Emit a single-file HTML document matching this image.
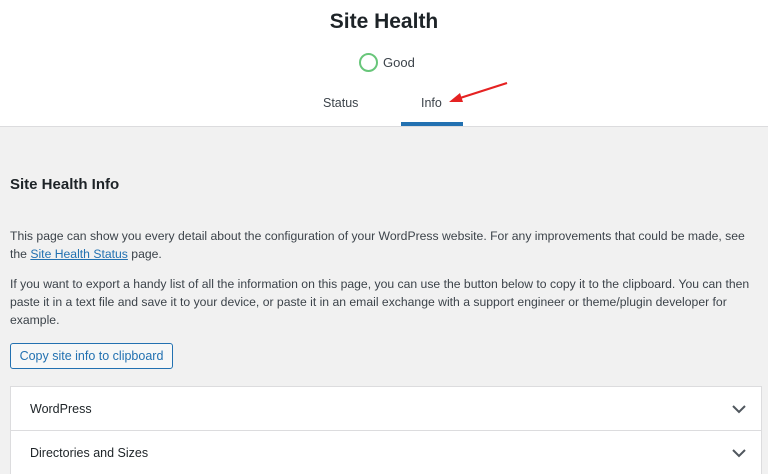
<!DOCTYPE html>
<html><head><style>
*{margin:0;padding:0;box-sizing:border-box}
html,body{width:768px;height:474px;overflow:hidden}
body{background:#f1f1f1;font-family:"Liberation Sans",sans-serif;color:#1d2327;position:relative}
.hdr{position:absolute;left:0;top:0;width:768px;height:127px;background:#fff;border-bottom:1px solid #dcdcde}
.t{position:absolute;top:10px;width:768px;text-align:center;font-size:21px;font-weight:600;color:#1d2327}
.good{position:absolute;left:359px;top:53px;width:19px;height:19px;border:2px solid #68c67a;border-radius:50%}
.gt{position:absolute;left:383px;top:55px;font-size:13px;color:#3c434a}
.tab{position:absolute;top:96px;font-size:12.5px;color:#3c434a}
.ul{position:absolute;left:401px;top:122px;width:62px;height:4px;background:#2271b1}
.a{position:absolute;left:10px;font-size:12.2px;line-height:18px;color:#3c434a;width:766px}
.btn{position:absolute;left:10px;top:343px;width:163px;height:26px;border:1px solid #2271b1;border-radius:3px;background:#f6f7f7;color:#2271b1;font-size:12.5px;text-align:center;line-height:24px}
.panel{position:absolute;left:10px;top:386px;width:752px;height:100px;background:#fff;border:1px solid #dcdcde}
.row{position:absolute;left:0;width:750px;height:44px;border-bottom:1px solid #dcdcde;font-size:12.5px;line-height:44px;padding-left:19px;color:#1d2327}
.row svg{position:absolute;right:15px;top:17px}
</style></head><body>
<div class="hdr">
<div class="t">Site Health</div>
<div class="good"></div><div class="gt">Good</div>
<div class="tab" style="left:323px">Status</div>
<div class="tab" style="left:421px">Info</div>
<div class="ul"></div>
<svg style="position:absolute;left:445px;top:80px" width="65" height="25"><line x1="62" y1="3" x2="12" y2="19" stroke="#e52222" stroke-width="2.2"/><polygon points="4,22 15,13 18,22" fill="#e52222"/></svg>
</div>
<div style="position:absolute;left:10px;top:176px;font-size:15px;font-weight:600">Site Health Info</div>
<div class="a" style="top:227px">This page can show you every detail about the configuration of your WordPress website. For any improvements that could be made, see<br>the <span style="color:#2271b1;text-decoration:underline">Site Health Status</span> page.</div>
<div class="a" style="top:275px">If you want to export a handy list of all the information on this page, you can use the button below to copy it to the clipboard. You can then<br>paste it in a text file and save it to your device, or paste it in an email exchange with a support engineer or theme/plugin developer for<br>example.</div>
<div class="btn">Copy site info to clipboard</div>
<div class="panel">
<div class="row" style="top:0">WordPress<svg width="14" height="10"><path d="M1 2l6 6 6-6" fill="none" stroke="#50575e" stroke-width="2"/></svg></div>
<div class="row" style="top:44px">Directories and Sizes<svg width="14" height="10"><path d="M1 2l6 6 6-6" fill="none" stroke="#50575e" stroke-width="2"/></svg></div>
</div>
</body></html>
